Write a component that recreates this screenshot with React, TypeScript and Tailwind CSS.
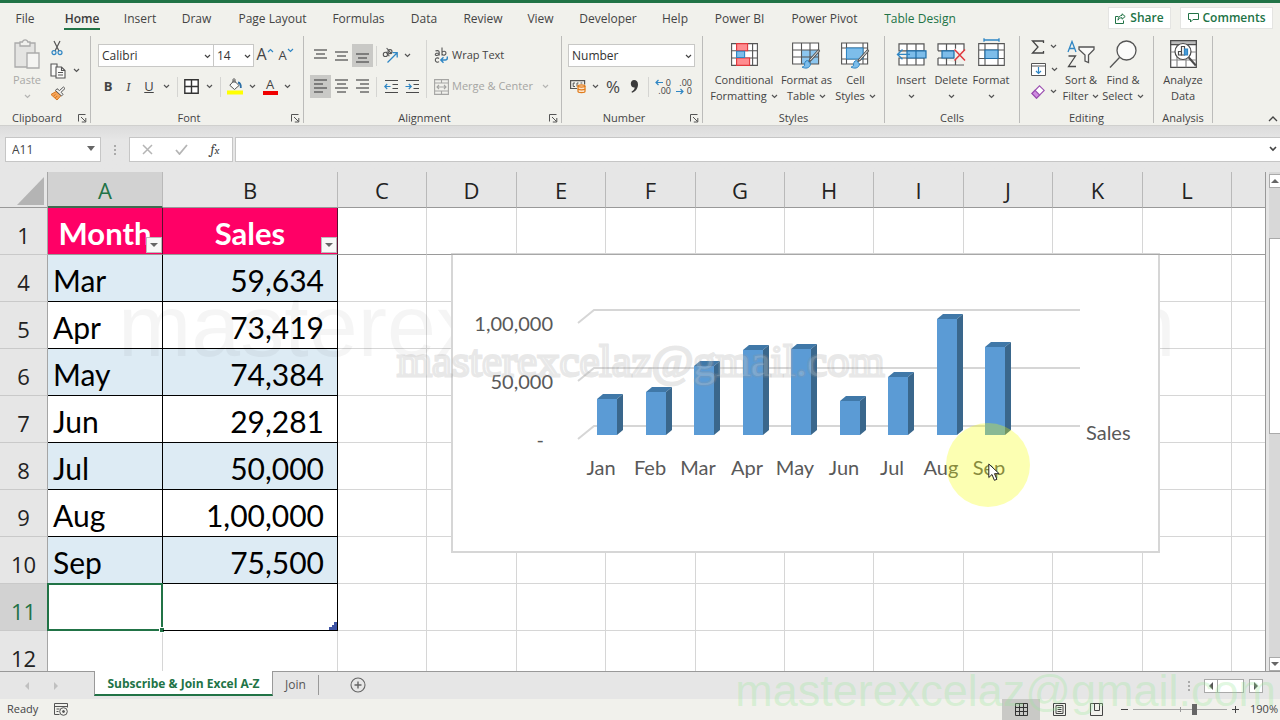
import type { ReactNode } from "react";
import clsx from "clsx";
import { twMerge } from "tailwind-merge";

const WATERMARK = "masterexcelaz@gmail.com";

const TABS = [
  { label: "File", width: "w-[48px]" },
  { label: "Home", width: "w-[66px]" },
  { label: "Insert", width: "w-[50px]" },
  { label: "Draw", width: "w-[63px]" },
  { label: "Page Layout", width: "w-[89px]" },
  { label: "Formulas", width: "w-[83px]" },
  { label: "Data", width: "w-[48px]" },
  { label: "Review", width: "w-[70px]" },
  { label: "View", width: "w-[45px]" },
  { label: "Developer", width: "w-[90px]" },
  { label: "Help", width: "w-[44px]" },
  { label: "Power BI", width: "w-[85px]" },
  { label: "Power Pivot", width: "w-[85px]" },
  { label: "Table Design", width: "w-[106px]" },
];

const COLUMNS = [
  { name: "A", width: "w-[115px]" },
  { name: "B", width: "w-[175px]" },
  { name: "C", width: "w-[89px]" },
  { name: "D", width: "w-[90px]" },
  { name: "E", width: "w-[89px]" },
  { name: "F", width: "w-[90px]" },
  { name: "G", width: "w-[89px]" },
  { name: "H", width: "w-[89px]" },
  { name: "I", width: "w-[90px]" },
  { name: "J", width: "w-[89px]" },
  { name: "K", width: "w-[90px]" },
  { name: "L", width: "w-[89px]" },
];

// Columns right of the table, plus the partly visible one
const EMPTY_COLUMNS = ["C", "D", "E", "F", "G", "H", "I", "J", "K", "L", "M"];

const ROWS = [
  { n: 4, month: "Mar", sales: "59,634" },
  { n: 5, month: "Apr", sales: "73,419" },
  { n: 6, month: "May", sales: "74,384" },
  { n: 7, month: "Jun", sales: "29,281" },
  { n: 8, month: "Jul", sales: "50,000" },
  { n: 9, month: "Aug", sales: "1,00,000" },
  { n: 10, month: "Sep", sales: "75,500" },
];

const CHART_DATA = [
  { month: "Jan", value: 31000 },
  { month: "Feb", value: 37000 },
  { month: "Mar", value: 59634 },
  { month: "Apr", value: 73419 },
  { month: "May", value: 74384 },
  { month: "Jun", value: 29281 },
  { month: "Jul", value: 50000 },
  { month: "Aug", value: 100000 },
  { month: "Sep", value: 75500 },
];

/* ---------- small pieces ---------- */

function Chevron({ className = "text-[#555]" }: { className?: string }) {
  return (
    <svg width="7" height="5" viewBox="0 0 7 5" className={clsx("shrink-0", className)} aria-hidden>
      <path d="M1 1l2.5 2.5L6 1" fill="none" stroke="currentColor" strokeWidth="1.2" />
    </svg>
  );
}

function Tool({
  label,
  className,
  children,
}: {
  label: string;
  className?: string;
  children: ReactNode;
}) {
  return (
    <button
      type="button"
      aria-label={label}
      className={twMerge("flex h-full shrink-0 items-center justify-center", className)}
    >
      {children}
    </button>
  );
}

function Rule() {
  return <span className="mx-[3px] h-5 w-px shrink-0 bg-[#d5d5d2]" />;
}

function Dropdown({
  label,
  value,
  className,
}: {
  label: string;
  value: string;
  className: string;
}) {
  return (
    <label className={clsx("relative block h-[23px] shrink-0", className)}>
      <select
        aria-label={label}
        defaultValue={value}
        className="block h-full w-full appearance-none border border-[#c8c8c6] bg-white pl-[3px] text-[12px] text-[#333]"
      >
        <option>{value}</option>
      </select>
      <Chevron className="pointer-events-none absolute top-[10px] right-[3px] text-[#444]" />
    </label>
  );
}

function Group({
  label,
  width,
  launcher,
  children,
}: {
  label: string;
  width: string;
  launcher?: boolean;
  children: ReactNode;
}) {
  return (
    <section
      aria-label={label}
      className={clsx("flex h-[87px] shrink-0 flex-col border-r border-[#bcbcba]", width)}
    >
      <div className="min-h-0 flex-1">{children}</div>
      <div
        className={clsx(
          "relative h-4 text-center text-[11px] leading-[22px] text-[#444]",
          launcher && "pr-4",
        )}
      >
        {label}
        {launcher && (
          <button
            type="button"
            aria-label={`${label} settings`}
            className="absolute top-[7px] right-[3px]"
          >
            <svg width="9" height="9" viewBox="0 0 9 9" fill="none" stroke="#555" className="block">
              <path d="M.5 7.5v-7h7M3 3l4.5 4.5M7.8 4v4h-4" />
            </svg>
          </button>
        )}
      </div>
    </section>
  );
}

function BigButton({
  icon,
  lines,
  width,
  chevron = "inline",
}: {
  icon: ReactNode;
  lines: [string, string?];
  width: string;
  chevron?: "inline" | "below" | "none";
}) {
  return (
    <button
      type="button"
      className={clsx(
        "flex shrink-0 flex-col items-center text-[11px] leading-4 whitespace-nowrap text-[#444]",
        width,
      )}
    >
      <span className="flex h-[36px] items-center justify-center">{icon}</span>
      <span>{lines[0]}</span>
      <span className="flex h-4 items-center gap-1">
        {lines[1]}
        {chevron !== "none" && <Chevron />}
      </span>
    </button>
  );
}

/* ---------- icons ---------- */

function PasteIcon() {
  return (
    <svg width="28" height="32" viewBox="0 0 28 32" fill="#e4e4e2" stroke="#aaa" strokeWidth="1.3">
      <path d="M2 5h20v24H2z" />
      <path d="M7 8V4h2.500a2.700 2.700 0 0 1 5.300 0H17v4z" fill="#f1f1ee" />
      <path d="M14 15h12v15H14z" fill="#f4f4f2" />
    </svg>
  );
}

function CutIcon() {
  return (
    <svg width="12" height="16" viewBox="0 0 12 16" fill="none" strokeWidth="1.2">
      <path d="M3 1l5 10M9 1L4 11" stroke="#555" />
      <circle cx="3" cy="12.600" r="2" stroke="#2f86c4" />
      <circle cx="9" cy="12.600" r="2" stroke="#2f86c4" />
    </svg>
  );
}

function CopyIcon() {
  return (
    <svg width="16" height="16" viewBox="0 0 16 16" fill="#fafaf8" stroke="#555" strokeWidth="1.1">
      <path d="M1 1h6v12H1z" />
      <path d="M6 4h5.500l3.500 3.500V15H6z" />
      <path d="M11.500 4v3.500H15M8 9.500h5M8 12h5" fill="none" />
    </svg>
  );
}

function PainterIcon() {
  return (
    <svg width="16" height="15" viewBox="0 0 16 15">
      <path d="M6 5.500L1 8.500 7 14l4-4.500z" fill="#f5a55a" stroke="#d9771e" />
      <path d="M3.500 10l2-1.500M5.200 12l2-2" stroke="#d9771e" />
      <path d="M5.500 4.500l6 5.500 1.500-1.700-2-2L15 2.500 13.400 1 9.500 4.600 7 2.700z" fill="#f5f5f3" stroke="#555" />
    </svg>
  );
}

function LinesIcon({ rows }: { rows: [number, number, number][] }) {
  return (
    <svg width="15" height="15" viewBox="0 0 15 15" stroke="#4a4a4a" strokeWidth="1.2">
      {rows.map(([x1, x2, y]) => (
        <line key={y} x1={x1} x2={x2} y1={y} y2={y} />
      ))}
    </svg>
  );
}

function IndentIcon({ out }: { out?: boolean }) {
  return (
    <svg width="15" height="15" viewBox="0 0 15 15" fill="none" strokeWidth="1.2">
      <path d="M1 1.500h13M8.500 5.500H14M8.500 9.500H14M1 13.500h13" stroke="#4a4a4a" />
      <path d={out ? "M6.500 7.500H1M3.200 5L.8 7.500 3.200 10" : "M.5 7.500H6M3.800 5l2.400 2.500L3.800 10"} stroke="#2f86c4" />
    </svg>
  );
}

function OrientationIcon() {
  return (
    <svg width="17" height="17" viewBox="0 0 17 17" fill="none">
      <g stroke="#555" strokeWidth="1.1">
        <circle cx="3.400" cy="7.400" r="2.100" />
        <path d="M4.300 4.900l3 4.300" />
        <circle cx="8" cy="4.600" r="2" />
        <path d="M4.600 1l5 5.800" />
      </g>
      <path d="M5.500 15.500L15 6M10.500 5.700h4.700v4.700" stroke="#2f86c4" strokeWidth="1.3" />
    </svg>
  );
}

function WrapIcon() {
  return (
    <svg width="15" height="17" viewBox="0 0 15 17" fill="none" strokeWidth="1.1">
      <g stroke="#555">
        <path d="M1.500 4.200c.8-.8 3.700-1 3.700 1V8.500M5.200 6C3 6 1.300 6.300 1.300 7.400c0 1.500 3 1.400 3.900-.4" />
        <path d="M8 .5v8M8 5.500c1-2 4-1.600 4 .6s-3 2.900-4 1" />
        <path d="M5 11.500c-1.500-1.300-3.700-.4-3.700 1.500s2.200 2.900 3.700 1.600" />
      </g>
      <path d="M13.300 9.500v1.500c0 1.500-1 2-2 2H7M9.500 10.300L6.800 13l2.700 2.700" stroke="#2f86c4" strokeWidth="1.400" />
    </svg>
  );
}

function MergeIcon() {
  return (
    <svg width="15" height="16" viewBox="0 0 15 16" fill="none" stroke="#a5a5a3" strokeWidth="1.1">
      <path d="M.6.6h13.800v14.800H.6zM.6 4h13.800M.6 12h13.800M7.500.6V4M7.500 12v3.400" />
      <path d="M3 8h9M5 6L3 8l2 2M10 6l2 2-2 2" />
    </svg>
  );
}

function BordersIcon() {
  return (
    <svg width="15" height="15" viewBox="0 0 15 15" fill="#fff" stroke="#333" strokeWidth="1.4">
      <path d="M.8.8h13.400v13.400H.8zM7.500.8v13.400M.8 7.500h13.400" />
    </svg>
  );
}

function FillIcon() {
  return (
    <svg width="16" height="17" viewBox="0 0 16 17" fill="none">
      <path d="M7 2.500L12 7.500 7.500 11.500 2.800 7.300z" fill="#fafaf8" stroke="#555" />
      <path d="M6 5V1.500c0-1 2-1 2 0V5" stroke="#555" />
      <path d="M11 4.500c2 .3 3 2 2.800 5.500" stroke="#2b6ea6" strokeWidth="1.800" />
      <path d="M0 12.500h16v4H0z" fill="#ff0" />
    </svg>
  );
}

function AccountingIcon() {
  return (
    <svg width="16" height="15" viewBox="0 0 16 15" fill="none">
      <path d="M7 9.500H.6V1.600h14v4" stroke="#555" strokeWidth="1.200" />
      <path d="M5 4H3.200v3.500H5M8.500 4H7v3.500M10.500 4h1.800" stroke="#555" />
      <path d="M8 7c0-1.500 7-1.500 7 0v5.500c0 1.500-7 1.500-7 0z" fill="#fbe3cc" stroke="#e07b1a" strokeWidth="1.200" />
      <path d="M8 7c0 1.400 7 1.400 7 0M8 9.800c0 1.400 7 1.400 7 0" stroke="#e07b1a" strokeWidth="1.200" />
    </svg>
  );
}

function DecimalIcon({ increase }: { increase?: boolean }) {
  return (
    <span className="relative block h-4 w-4 text-[9px] leading-[8px] text-[#444]">
      <span className="block text-right">{increase ? "0" : ".00"}</span>
      <span className="block text-right">{increase ? ".00" : "0"}</span>
      <svg
        width="8"
        height="7"
        viewBox="0 0 8 7"
        fill="none"
        stroke="#2f86c4"
        strokeWidth="1.2"
        className={clsx("absolute left-0", increase ? "top-0" : "top-[9px]")}
      >
        <path d={increase ? "M8 3.500H1M3.500 1L1 3.500 3.500 6" : "M0 3.500h7M4.500 1L7 3.500 4.500 6"} />
      </svg>
    </span>
  );
}

function BrushShape() {
  return (
    <g transform="translate(8 6)">
      <path d="M18.500 1.500L10 11l-2 3 3-1.500L19.500 3z" fill="#f5f5f3" stroke="#555" strokeWidth="1.100" />
      <path d="M7.500 12.500c-2.500 0-3 3-3 4.500 0 1.500-1.500 2-2.500 2 3 2 8 1.500 8.500-3z" fill="#7dbdea" stroke="#2f86c4" />
    </g>
  );
}

function ConditionalIcon() {
  return (
    <svg width="27" height="23" viewBox="0 0 27 23" fill="#fff" stroke="#555" strokeWidth="1.1">
      <path d="M.6.6h25.800v21.800H.6z" />
      <path d="M.6 7.800h25.800M.6 15h25.800M5.600.6v21.800M21.600.6v21.800" />
      <path d="M5.600.6h11v7.200h-11zM5.600 15h13v7.400h-13z" fill="#ff8c90" stroke="#e0393e" />
      <path d="M5.600 8.300h8v6.200h-8z" fill="#7dbdea" stroke="#2f86c4" />
    </svg>
  );
}

function FormatTableIcon() {
  return (
    <svg width="29" height="28" viewBox="0 0 29 28" fill="none" className="mt-1">
      <path d="M.6 1h26v21H.6z" fill="#fff" />
      <path d="M9.500 8h17v14h-17z" fill="#8cc6ef" />
      <path d="M.6 1h26v21H.6zM.6 8h26M.6 15h26M9.500 1v21M18 1v21" stroke="#555" strokeWidth="1.1" />
      <BrushShape />
    </svg>
  );
}

function CellStylesIcon() {
  return (
    <svg width="29" height="28" viewBox="0 0 29 28" fill="none" className="mt-1">
      <path d="M.6 1h26v21H.6z" fill="#fff" />
      <path d="M.6 1h26v21H.6zM.6 6h26M.6 17h26M5.500 1v21M22 1v21" stroke="#555" strokeWidth="1.1" />
      <path d="M5.500 6H22v11H5.500z" fill="#7dbdea" stroke="#2f86c4" />
      <BrushShape />
    </svg>
  );
}

function InsertCellsIcon() {
  return (
    <svg width="31" height="23" viewBox="0 0 31 23" fill="#fff" stroke="#555" strokeWidth="1.2">
      <path d="M3 .8h25v7H3zM3 15h25v7H3zM11 .8v7M20 .8v7M11 15v7M20 15v7" />
      <path d="M11 7.800h19V15H11zM20 7.800V15" fill="#7dbdea" stroke="#1f6ea8" />
      <path d="M14 11.400H2M6.500 6.500l-5 4.900 5 4.900" fill="none" stroke="#2f86c4" strokeWidth="1.400" />
    </svg>
  );
}

function DeleteCellsIcon() {
  return (
    <svg width="29" height="23" viewBox="0 0 29 23" fill="#fff" stroke="#555" strokeWidth="1.2">
      <path d="M1 7.800V.8h26v7M1 15v7h26M1 7.800h16M1 15h16M9.500.8v7M18.500.8v5M9.500 15v7M18.500 17v5" />
      <path d="M5 7.800h12V15H5z" fill="#7dbdea" stroke="#1f6ea8" />
      <path d="M17.500 6.500l10.500 11M28 6.500L17.500 17.500" stroke="#e0393e" strokeWidth="1.500" />
    </svg>
  );
}

function FormatCellsIcon() {
  return (
    <svg width="27" height="28" viewBox="0 0 27 28" fill="#fff" stroke="#555" strokeWidth="1.1" className="mb-1">
      <path d="M6 2h15M6 .2v3.600M21 .2v3.600" stroke="#2f86c4" strokeWidth="1.300" />
      <path d="M.7 5.600h25.600v21.800H.7zM.7 12h25.600M.7 20.500h25.600M7 5.600v21.800M20 5.600v21.800" />
      <path d="M7 12h13v8.500H7z" fill="#7dbdea" stroke="#1f6ea8" />
    </svg>
  );
}

function SortFilterIcon() {
  return (
    <svg width="28" height="28" viewBox="0 0 28 28" fill="none" strokeWidth="1.3">
      <path d="M1 12L5 1.500 9 12M2.500 8.500h5" stroke="#2f86c4" />
      <path d="M1.500 16h7l-7 10.500H9" stroke="#4a4a4a" />
      <path d="M12 7h15v2.500L21.500 15v7.500L18 21v-6l-6-5.500z" fill="#fafaf8" stroke="#555" />
    </svg>
  );
}

function FindIcon() {
  return (
    <svg width="28" height="29" viewBox="0 0 28 29" stroke="#555" strokeWidth="1.3">
      <circle cx="17.500" cy="10.500" r="9.500" fill="#fbfbfa" />
      <path d="M10.500 17.500L1 27.500" />
    </svg>
  );
}

function AnalyzeIcon() {
  return (
    <svg width="27" height="28" viewBox="0 0 27 28" fill="none" stroke="#4a4a4a" strokeWidth="1.2">
      <path d="M.7.700h25.600v26.600H.7z" fill="#fff" />
      <path d="M.7.700h25.600v4H.7z" fill="#bbb" />
      <path d="M.7 12h25.600M.7 20h25.600M7 4.700v22.600M16 20v7.300" stroke="#888" />
      <circle cx="13" cy="11.500" r="8" fill="#fff" />
      <path d="M18.800 17.500l7 8" strokeWidth="2" />
      <path d="M8.500 11.500h3V15h-3z" />
      <path d="M11.500 6.500h3V15h-3z" fill="#fff" />
      <path d="M14.500 9h3v6h-3z" fill="#4a9bd8" stroke="#2f86c4" />
    </svg>
  );
}

/* ---------- ribbon ---------- */

function RibbonTabs() {
  return (
    <nav className="flex h-[33px] items-center pl-px text-[12px] text-[#444]">
      {TABS.map((tab) => (
        <button
          key={tab.label}
          type="button"
          className={clsx(
            "flex h-full shrink-0 items-center justify-center pb-[2px] whitespace-nowrap",
            tab.width,
            tab.label === "Table Design" && "text-[#217346]",
          )}
        >
          {tab.label === "Home" ? (
            <span className="relative font-semibold text-[#3b3b3b]">
              Home
              <span className="absolute -inset-x-px -bottom-[2px] h-[2px] bg-[#217346]" />
            </span>
          ) : (
            tab.label
          )}
        </button>
      ))}
      <div className="mr-[7px] ml-auto flex shrink-0 gap-[9px] pb-[3px] font-semibold text-[#217346]">
        <button type="button" className="flex h-[22px] w-[63px] items-center justify-center gap-1 border border-[#e4e4e2] bg-white">
          <svg width="11" height="11" viewBox="0 0 11 11" fill="none" stroke="currentColor">
            <path d="M3.500 3.500h-3v7h8v-3M7 .8l3.200 2.700L7 6.200V4.700C5 4.700 3.800 5.500 3 7.200 3.200 4.200 4.700 2.500 7 2.400z" />
          </svg>
          Share
        </button>
        <button type="button" className="flex h-[22px] w-[93px] items-center justify-center gap-1 border border-[#e4e4e2] bg-white">
          <svg width="11" height="10" viewBox="0 0 11 10" fill="none" stroke="currentColor">
            <path d="M.5.5h10v6H5L2.500 9V6.500h-2z" />
          </svg>
          Comments
        </button>
      </div>
    </nav>
  );
}

function Ribbon() {
  return (
    <div className="relative flex h-[90px] border-b border-[#d0d0ce]">
      <Group label="Clipboard" width="w-[91px]" launcher>
        <div className="flex pt-[2px] pl-[9px]">
          <button type="button" className="flex w-[36px] flex-col items-center text-[11px] leading-4 text-[#a9a9a7]">
            <PasteIcon />
            <span className="mt-[2px]">Paste</span>
            <span className="flex h-4 items-center">
              <Chevron className="text-[#b5b5b3]" />
            </span>
          </button>
          <div className="ml-[3px] flex w-8 flex-col">
            <Tool label="Cut" className="h-[20px] w-[18px]"><CutIcon /></Tool>
            <Tool label="Copy" className="h-[25px] w-8 justify-start gap-[7px] pl-[2px]">
              <CopyIcon />
              <Chevron />
            </Tool>
            <Tool label="Format Painter" className="h-[20px] w-[20px]"><PainterIcon /></Tool>
          </div>
        </div>
      </Group>

      <Group label="Font" width="w-[213px]" launcher>
        <div className="flex flex-col gap-2 pt-2 pl-[7px] text-[#444]">
          <div className="flex h-[23px]">
            <Dropdown label="Font name" value="Calibri" className="w-[116px]" />
            <Dropdown label="Font size" value="14" className="-ml-px w-[41px]" />
            <Tool label="Increase font size" className="w-[22px] items-start text-[16px] leading-5">
              A<span className="mt-1"><Chevron className="rotate-180 text-[#2f86c4]" /></span>
            </Tool>
            <Tool label="Decrease font size" className="w-5 items-start text-[13px] leading-[22px]">
              A<span className="mt-1"><Chevron className="text-[#2f86c4]" /></span>
            </Tool>
          </div>
          <div className="flex h-[23px] items-center text-[13px]">
            <Tool label="Bold" className="w-5 font-bold">B</Tool>
            <Tool label="Italic" className="w-[21px] font-serif italic">I</Tool>
            <Tool label="Underline" className="w-5 underline">U</Tool>
            <Tool label="Underline styles" className="w-[15px]"><Chevron /></Tool>
            <Rule />
            <Tool label="Borders" className="w-[21px]"><BordersIcon /></Tool>
            <Tool label="Border styles" className="w-[15px]"><Chevron /></Tool>
            <Rule />
            <Tool label="Fill color" className="w-[22px]"><FillIcon /></Tool>
            <Tool label="Fill colors" className="w-[13px]"><Chevron /></Tool>
            <Tool label="Font color" className="w-[22px]">
              <span className="w-[15px] border-b-4 border-[#f00000] text-[13px] leading-[13px]">A</span>
            </Tool>
            <Tool label="Font colors" className="w-[12px]"><Chevron /></Tool>
          </div>
        </div>
      </Group>

      <Group label="Alignment" width="w-[258px]" launcher>
        <div className="flex pt-2 pl-[6px] text-[12px] text-[#444]">
          <div className="flex w-[116px] flex-col gap-2">
            <div className="flex h-[23px] items-center">
              <Tool label="Top align" className="w-[21px]">
                <LinesIcon rows={[[1, 14, 2], [3, 12, 6], [1, 14, 10]]} />
              </Tool>
              <Tool label="Middle align" className="w-[21px]">
                <LinesIcon rows={[[1, 14, 4], [3, 12, 8], [1, 14, 12]]} />
              </Tool>
              <Tool label="Bottom align" className="w-[21px] bg-[#c9c9c6]">
                <LinesIcon rows={[[1, 14, 6], [3, 12, 10], [1, 14, 14]]} />
              </Tool>
              <Rule />
              <Tool label="Orientation" className="w-[21px]"><OrientationIcon /></Tool>
              <Tool label="Orientation options" className="w-[12px]"><Chevron /></Tool>
            </div>
            <div className="flex h-[23px] items-center">
              <Tool label="Align left" className="w-[21px] bg-[#c9c9c6]">
                <LinesIcon rows={[[1, 14, 1], [1, 10, 5], [1, 14, 9], [1, 10, 13]]} />
              </Tool>
              <Tool label="Center" className="w-[21px]">
                <LinesIcon rows={[[1, 14, 1], [3, 12, 5], [1, 14, 9], [3, 12, 13]]} />
              </Tool>
              <Tool label="Align right" className="w-[21px]">
                <LinesIcon rows={[[1, 14, 1], [5, 14, 5], [1, 14, 9], [5, 14, 13]]} />
              </Tool>
              <Rule />
              <Tool label="Decrease indent" className="w-[22px]"><IndentIcon out /></Tool>
              <Tool label="Increase indent" className="w-[21px]"><IndentIcon /></Tool>
            </div>
          </div>
          <span className="-mt-1 h-[58px] w-px bg-[#d5d5d2]" />
          <div className="ml-[7px] flex flex-col gap-2">
            <button type="button" className="flex h-[23px] items-center gap-[3px] text-[11px]">
              <WrapIcon />
              Wrap Text
            </button>
            <button type="button" className="flex h-[23px] items-center gap-[3px] text-[11px] text-[#a5a5a3]">
              <MergeIcon />
              Merge &amp; Center
              <Chevron className="ml-[6px] text-[#b5b5b3]" />
            </button>
          </div>
        </div>
      </Group>

      <Group label="Number" width="w-[141px]" launcher>
        <div className="flex flex-col gap-2 pt-2 pl-[6px] text-[#444]">
          <Dropdown label="Number format" value="Number" className="w-[127px]" />
          <div className="flex h-[23px] items-center">
            <Tool label="Accounting format" className="w-[20px]"><AccountingIcon /></Tool>
            <Tool label="Currencies" className="w-[14px]"><Chevron /></Tool>
            <Tool label="Percent style" className="w-[22px] text-[17px]">%</Tool>
            <Tool label="Comma style" className="w-[21px]">
              <svg width="9" height="13" viewBox="0 0 9 13" fill="#3b3b3b">
                <path d="M4 0c2.500 0 4 1.600 4 4.500C8 8.500 5.500 11.500 2 12.800l-.5-1C3.500 10.500 4.700 9 4.700 7.500 2.500 7.800.8 6.200.8 3.800.8 1.500 2.300 0 4 0z" />
              </svg>
            </Tool>
            <Rule />
            <Tool label="Increase decimal" className="w-[22px]"><DecimalIcon increase /></Tool>
            <Tool label="Decrease decimal" className="w-[20px]"><DecimalIcon /></Tool>
          </div>
        </div>
      </Group>

      <Group label="Styles" width="w-[182px]">
        <div className="flex pl-[6px]">
          <BigButton icon={<ConditionalIcon />} lines={["Conditional", "Formatting"]} width="w-[70px]" />
          <BigButton icon={<FormatTableIcon />} lines={["Format as", "Table"]} width="w-[55px]" />
          <BigButton icon={<CellStylesIcon />} lines={["Cell", "Styles"]} width="w-[43px]" />
        </div>
      </Group>

      <Group label="Cells" width="w-[135px]">
        <div className="flex pl-[6px]">
          <BigButton icon={<InsertCellsIcon />} lines={["Insert"]} width="w-[40px]" chevron="below" />
          <BigButton icon={<DeleteCellsIcon />} lines={["Delete"]} width="w-[40px]" chevron="below" />
          <BigButton icon={<FormatCellsIcon />} lines={["Format"]} width="w-[40px]" chevron="below" />
        </div>
      </Group>

      <Group label="Editing" width="w-[134px]">
        <div className="flex pl-[8px]">
          <div className="flex w-[32px] flex-col text-[#444]">
            <Tool label="AutoSum" className="h-[21px] gap-[5px]">
              <svg width="14" height="14" viewBox="0 0 14 14" fill="none" stroke="#444" strokeWidth="1.3">
                <path d="M12.500 3V1H1.500L7 7l-5.500 6h11v-2" />
              </svg>
              <Chevron />
            </Tool>
            <Tool label="Fill" className="h-[24px] gap-[5px]">
              <svg width="15" height="13" viewBox="0 0 15 13" fill="none" stroke="#555">
                <path d="M.5.500h14v12H.5zM.5 3h14" fill="#fff" />
                <path d="M7.500 4v6.500M5 8l2.500 2.500L10 8" stroke="#2f86c4" strokeWidth="1.200" />
              </svg>
              <Chevron />
            </Tool>
            <Tool label="Clear" className="h-[21px] gap-[5px]">
              <svg width="14" height="14" viewBox="0 0 14 14" stroke="#9b4fb0" strokeWidth="1.100">
                <path d="M1 8.500L8.500.8l4.700 4.600-7.700 7.800z" fill="#fff" />
                <path d="M1 8.500L4 5.400l4.700 4.600-3.200 3.200z" fill="#cf8be0" />
              </svg>
              <Chevron />
            </Tool>
          </div>
          <BigButton icon={<SortFilterIcon />} lines={["Sort &", "Filter"]} width="w-[42px]" />
          <BigButton icon={<FindIcon />} lines={["Find &", "Select"]} width="w-[42px]" />
        </div>
      </Group>

      <Group label="Analysis" width="w-[59px]">
        <BigButton icon={<AnalyzeIcon />} lines={["Analyze", "Data"]} width="w-[58px]" chevron="none" />
      </Group>

      <button type="button" aria-label="Collapse ribbon" className="absolute right-[2px] bottom-[3px]">
        <svg width="10" height="6" viewBox="0 0 10 6" fill="none" stroke="#444" strokeWidth="1.300">
          <path d="M1 5l4-4 4 4" />
        </svg>
      </button>
    </div>
  );
}

function FormulaBar() {
  return (
    <div className="flex h-[46px] shrink-0 items-start bg-gradient-to-b from-[#dcdcdc] to-[#e6e6e6] to-30% pt-[11px] text-[12px]">
      <label className="relative ml-[5px] block h-[25px] w-[96px]">
        <input
          aria-label="Name box"
          defaultValue="A11"
          className="block h-full w-full border border-[#c6c6c6] bg-white pl-[6px] text-[#444]"
        />
        <span className="absolute top-[9px] right-[6px] border-x-4 border-t-[5px] border-x-transparent border-t-[#666]" />
      </label>
      <span className="flex h-[25px] w-[28px] flex-col items-center justify-center gap-[2px]">
        <span className="size-[2px] bg-[#aaa]" />
        <span className="size-[2px] bg-[#aaa]" />
        <span className="size-[2px] bg-[#aaa]" />
      </span>
      <div className="flex h-[25px] w-[104px] items-center border border-[#c6c6c6] bg-white">
        <Tool label="Cancel" className="w-[34px]">
          <svg width="11" height="11" viewBox="0 0 11 11" stroke="#b5b5b5" strokeWidth="1.500">
            <path d="M1 1l9 9M10 1l-9 9" />
          </svg>
        </Tool>
        <Tool label="Enter" className="w-[34px]">
          <svg width="13" height="11" viewBox="0 0 13 11" fill="none" stroke="#b5b5b5" strokeWidth="1.800">
            <path d="M1 6l3.500 4L12 1" />
          </svg>
        </Tool>
        <Tool label="Insert function" className="w-[34px] font-serif text-[14px] text-[#444] italic">
          f<span className="pt-1 text-[11px]">x</span>
        </Tool>
      </div>
      <label className="relative ml-[2px] block h-[25px] flex-1">
        <input aria-label="Formula" className="block h-full w-full border border-r-0 border-[#c6c6c6] bg-white px-2" />
        <svg width="8" height="6" viewBox="0 0 8 6" fill="none" stroke="#444" strokeWidth="1.600" className="absolute top-[9px] right-[3px]">
          <path d="M1 1l3 3 3-3" />
        </svg>
      </label>
    </div>
  );
}

/* ---------- sheet ---------- */

function RowHeader({ n, active }: { n: number; active?: boolean }) {
  return (
    <th
      scope="row"
      className={clsx(
        "border-r border-b border-r-[#a5a5a5] border-b-[#c9c9c9] pt-[7px] text-center font-normal",
        active ? "bg-[#d2d2d2] text-[#217346]" : "bg-[#e6e6e6] text-[#222]",
        n === 1 && "border-b-[#999]",
      )}
    >
      {n}
    </th>
  );
}

function EmptyCells({ frozen }: { frozen?: boolean }) {
  return EMPTY_COLUMNS.map((c) => (
    <td
      key={c}
      className={clsx("border-b border-[#d6d6d6]", c !== "M" && "border-r", frozen && "border-b-[#9a9a9a]")}
    />
  ));
}

function FilterButton({ column }: { column: string }) {
  return (
    <button
      type="button"
      aria-label={`Filter ${column}`}
      className="absolute right-0 bottom-px flex size-4 items-center justify-center border border-[#bbb] bg-[#f8f8f8]"
    >
      <span className="border-x-4 border-t-4 border-x-transparent border-t-[#666]" />
    </button>
  );
}

function Grid() {
  return (
    <table className="w-full table-fixed border-separate border-spacing-0 bg-white text-[22px] leading-7">
      <colgroup>
        <col className="w-[48px]" />
        {COLUMNS.map((c) => (
          <col key={c.name} className={c.width} />
        ))}
        <col />
      </colgroup>
      <thead>
        <tr className="h-9 bg-[#e6e6e6]">
          <th className="relative border-r border-b border-r-[#a5a5a5] border-b-[#999]">
            <svg width="27" height="28" viewBox="0 0 27 28" className="absolute right-[3px] bottom-[2px]">
              <path d="M27 0v28H0z" fill="#b4b4b4" />
            </svg>
          </th>
          {COLUMNS.map((c) => (
            <th
              key={c.name}
              scope="col"
              className={clsx(
                "border-r border-b border-r-[#b9b9b9] pt-px font-normal",
                c.name === "A"
                  ? "border-b-2 border-b-[#3f6b50] bg-[#d2d2d2] text-[#217346]"
                  : "border-b-[#999] text-[#222]",
              )}
            >
              {c.name}
            </th>
          ))}
          <th className="border-b border-b-[#999]" />
        </tr>
      </thead>
      <tbody>
        <tr className="h-[47px]">
          <RowHeader n={1} />
          {["Month", "Sales"].map((title) => (
            <td
              key={title}
              className="relative border-r border-b border-r-[#5c1030] border-b-[#9a9a9a] bg-[#ff0066] pt-1 text-center font-[Lato] text-[31px] leading-9 font-bold text-white"
            >
              {title}
              <FilterButton column={title} />
            </td>
          ))}
          <EmptyCells frozen />
        </tr>
        {ROWS.map((row) => (
          <tr key={row.n} className="h-[47px]">
            <RowHeader n={row.n} />
            <td
              className={clsx(
                "border-r border-b border-black pt-1 pl-[5px] font-[Lato] text-[30px] leading-9 text-black",
                row.n % 2 === 0 && "bg-[#ddebf4]",
              )}
            >
              {row.month}
            </td>
            <td
              className={clsx(
                "border-r border-b border-black pt-1 pr-[13px] text-right font-[Lato] text-[30px] leading-9 text-black",
                row.n % 2 === 0 && "bg-[#ddebf4]",
              )}
            >
              {row.sales}
            </td>
            <EmptyCells />
          </tr>
        ))}
        <tr className="h-[47px]">
          <RowHeader n={11} active />
          <td className="relative border-r border-b border-black">
            <span className="absolute -top-px -right-px -bottom-px -left-px border-2 border-[#217346]" />
            <span className="absolute -right-[3px] -bottom-[3px] size-[6px] border border-white bg-[#217346]" />
          </td>
          <td className="relative border-r border-b border-black">
            <svg width="8" height="8" viewBox="0 0 8 8" className="absolute right-0 bottom-0">
              <path d="M5 0h3v8H0V5h3V3h2z" fill="#3f55a5" />
            </svg>
          </td>
          <EmptyCells />
        </tr>
        <tr className="h-[47px]">
          <RowHeader n={12} />
          <td className="border-r border-[#d6d6d6]" />
          <td className="border-r border-[#d6d6d6]" />
          <EmptyCells />
        </tr>
      </tbody>
    </table>
  );
}

const BASE = 182;
const STEP = 58; // height of 50,000

function SalesChart() {
  return (
    <svg
      role="img"
      aria-label="Sales by month"
      width="709"
      height="300"
      viewBox="0 0 709 300"
      className="absolute top-[81px] left-[451px] font-[Lato] text-[20px]"
    >
      <rect x="1" y="1" width="707" height="298" fill="#fff" stroke="#d6d6d6" strokeWidth="2" />
      <path d="M0 1.500h709" stroke="#a8a8a8" />
      {[0, 1, 2].map((i) => (
        <path
          key={i}
          d={`M127 ${186 - i * STEP}L143 ${173 - i * STEP}H629`}
          fill="none"
          stroke="#d6d6d6"
          strokeWidth="2"
        />
      ))}
      {CHART_DATA.map(({ month, value }, i) => {
        const x = Math.round(146 + i * 48.5);
        const top = BASE - Math.round((value / 50000) * STEP);
        return (
          <g key={month}>
            <path d={`M${x} ${top}l6 -5h20l-6 5z`} fill="#4078a8" />
            <path d={`M${x + 20} ${top}l6 -5V${BASE - 5}l-6 5z`} fill="#3a678c" />
            <path d={`M${x} ${top}h20V${BASE}h-20z`} fill="#5b9bd5" />
            <text x={x + 4} y="222" textAnchor="middle" fill="#595959">
              {month}
            </text>
          </g>
        );
      })}
      <g fill="#595959" textAnchor="end">
        <text x="102" y="78">1,00,000</text>
        <text x="102" y="136">50,000</text>
        <text x="93" y="194">-</text>
      </g>
      <text x="635" y="187" fill="#595959">Sales</text>
    </svg>
  );
}

function Sheet() {
  return (
    <main className="flex min-h-0 flex-1 bg-[#e6e6e6]">
      <div className="relative min-w-0 flex-1 overflow-hidden border-r border-[#999]">
        <Grid />
        <span className="pointer-events-none absolute top-[104px] left-[118px] font-['Liberation_Sans'] text-[88px] leading-[100px] text-black/4">
          {WATERMARK}
        </span>
        <SalesChart />
        <span className="pointer-events-none absolute top-[164px] left-[397px] font-['Liberation_Serif'] text-[45px] leading-[50px] text-white/20 [-webkit-text-stroke:3px_rgba(150,150,150,0.22)]">
          {WATERMARK}
        </span>
        <span className="absolute top-[251px] left-[946px] size-[84px] rounded-full bg-[#f4ff00]/30" />
        <svg width="13" height="19" viewBox="0 0 13 19" className="absolute top-[291px] left-[988px]">
          <path d="M.8 1v13.500l3.200-3 2.400 5.800 2.500-1-2.400-5.600h4.700z" fill="#fff" stroke="#222" />
        </svg>
      </div>
      <div className="ml-[3px] flex w-[11px] flex-col bg-[#d8d8d8] pt-[2px]">
        <button type="button" aria-label="Scroll up" className="flex h-[14px] items-center justify-center border border-r-0 border-[#aaa] bg-white">
          <span className="border-x-4 border-b-4 border-x-transparent border-b-[#666]" />
        </button>
        <span className="mt-[50px] h-[196px] border border-r-0 border-[#aaa] bg-white" />
        <button type="button" aria-label="Scroll down" className="mt-auto flex h-[14px] items-center justify-center border border-r-0 border-[#aaa] bg-white">
          <span className="border-x-4 border-t-4 border-x-transparent border-t-[#666]" />
        </button>
      </div>
    </main>
  );
}

function SheetTabs() {
  return (
    <div className="flex h-[28px] shrink-0 items-start border-t border-[#999] bg-[#e6e6e6] text-[12px]">
      <Tool label="Previous sheet" className="w-[54px]">
        <span className="border-y-4 border-r-4 border-y-transparent border-r-[#c0c0c0]" />
      </Tool>
      <Tool label="Next sheet" className="w-[40px] justify-start">
        <span className="border-y-4 border-l-4 border-y-transparent border-l-[#c0c0c0]" />
      </Tool>
      <button
        type="button"
        className="-mt-px h-[25px] w-[179px] shrink-0 border-x border-b-2 border-x-[#999] border-b-[#217346] bg-white pt-[3px] text-[12px] font-bold whitespace-nowrap text-[#217346]"
      >
        Subscribe &amp; Join Excel A-Z
      </button>
      <button type="button" className="mt-[3px] h-5 w-[46px] shrink-0 border-r border-[#999] text-[#555]">
        Join
      </button>
      <Tool label="New sheet" className="w-[78px] pb-[2px]">
        <svg width="16" height="16" viewBox="0 0 16 16" fill="none" stroke="#666" strokeWidth="1.100">
          <circle cx="8" cy="8" r="7" />
          <path d="M8 4.500v7M4.500 8h7" strokeWidth="1.400" />
        </svg>
      </Tool>
      <div className="mr-[17px] ml-auto flex h-full items-center">
        <span className="mr-[14px] flex flex-col gap-[2px]">
          <span className="size-[2px] bg-[#aaa]" />
          <span className="size-[2px] bg-[#aaa]" />
          <span className="size-[2px] bg-[#aaa]" />
        </span>
        <button type="button" aria-label="Scroll left" className="flex size-[14px] items-center justify-center border border-[#aaa] bg-white">
          <span className="border-y-4 border-r-4 border-y-transparent border-r-[#555]" />
        </button>
        <span className="h-[14px] w-[26px] border border-l-0 border-[#aaa] bg-white" />
        <button type="button" aria-label="Scroll right" className="ml-[5px] flex size-[14px] items-center justify-center border border-[#aaa] bg-white">
          <span className="border-y-4 border-l-4 border-y-transparent border-l-[#555]" />
        </button>
      </div>
    </div>
  );
}

function StatusBar() {
  return (
    <footer className="flex h-[21px] shrink-0 items-center bg-[#f1f1ec] text-[11px] text-[#444]">
      <span className="w-[46px] pl-[7px]">Ready</span>
      <Tool label="Record macro" className="ml-2">
        <svg width="14" height="13" viewBox="0 0 14 13" fill="none" stroke="#555">
          <path d="M5.500 11.500h-5V.5h13v4M.5 3.500h13M2.500 6h3M2.500 8.500h2" />
          <circle cx="9.500" cy="8.500" r="3.800" />
          <circle cx="9.500" cy="8.500" r="1" fill="#555" />
        </svg>
      </Tool>
      <div className="ml-auto flex h-full items-center">
        <Tool label="Normal view" className="w-[38px] bg-[#c9c9c6]">
          <svg width="13" height="13" viewBox="0 0 13 13" fill="none" stroke="#333">
            <path d="M.5.5h12v12H.5zM4.500.5v12M8.500.5v12M.5 4.500h12M.5 8.500h12" />
          </svg>
        </Tool>
        <Tool label="Page layout view" className="w-[38px]">
          <svg width="13" height="13" viewBox="0 0 13 13" fill="none" stroke="#444">
            <path d="M.5.5h12v12H.5zM3 2.500h7v8H3zM4.500 4.500h4M4.500 6.500h4M4.500 8.500h4" />
          </svg>
        </Tool>
        <Tool label="Page break preview" className="w-[37px]">
          <svg width="13" height="13" viewBox="0 0 13 13" fill="none" stroke="#444">
            <path d="M.5.5h12v12H.5zM4.500.5v7h5v-7" />
          </svg>
        </Tool>
        <Tool label="Zoom out" className="w-[18px]">
          <span className="h-px w-[7px] bg-[#444]" />
        </Tool>
        <label className="relative flex h-full w-[94px] items-center">
          <span className="absolute left-[47px] h-[5px] w-px bg-[#999]" />
          <input
            type="range"
            aria-label="Zoom"
            min={0}
            max={100}
            defaultValue={66}
            className="h-px w-full appearance-none bg-[#a5a5a5] [&::-webkit-slider-thumb]:h-[11px] [&::-webkit-slider-thumb]:w-[5px] [&::-webkit-slider-thumb]:appearance-none [&::-webkit-slider-thumb]:bg-[#666]"
          />
        </label>
        <Tool label="Zoom in" className="w-[16px]">
          <svg width="7" height="7" viewBox="0 0 7 7" stroke="#444">
            <path d="M3.500 0v7M0 3.500h7" />
          </svg>
        </Tool>
        <button type="button" className="w-[37px] pr-[2px] text-right">190%</button>
      </div>
    </footer>
  );
}

export default function App() {
  return (
    <div className="relative flex h-screen flex-col overflow-hidden bg-[#f1f1ec] font-['Open_Sans','Noto_Sans',sans-serif]">
      <header className="shrink-0">
        <div className="h-[3px] bg-[#217346]" />
        <RibbonTabs />
        <Ribbon />
      </header>
      <FormulaBar />
      <Sheet />
      <SheetTabs />
      <StatusBar />
      <span className="pointer-events-none absolute right-[4px] bottom-0 font-['Liberation_Sans'] text-[45px] leading-[58px] text-[#98e898]/30">
        {WATERMARK}
      </span>
    </div>
  );
}
